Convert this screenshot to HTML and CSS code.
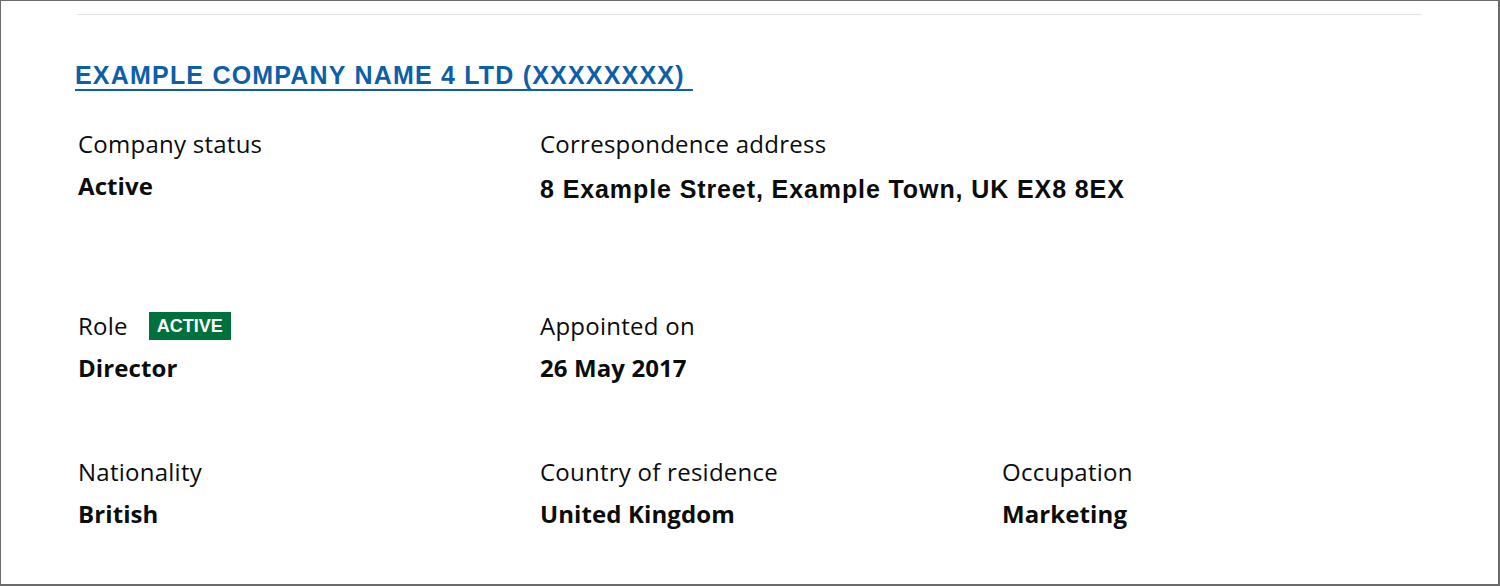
FILE: index.html
```html
<!DOCTYPE html>
<html lang="en">
<head>
<meta charset="utf-8">
<title>Appointment</title>
<link rel="stylesheet" href="styles.css">
</head>
<body>
<div class="frame">
  <div class="container">
    <hr class="rule">
    <h2 class="title"><a href="#" class="title-link">EXAMPLE COMPANY NAME 4 LTD (XXXXXXXX) </a></h2>
    <div class="row row-first">
      <div class="cell">
        <div class="label">Company status</div>
        <div class="value">Active</div>
      </div>
      <div class="cell cell-wide">
        <div class="label">Correspondence address</div>
        <div class="value value-address">8 Example Street, Example Town, UK EX8 8EX</div>
      </div>
    </div>
    <div class="row row-second">
      <div class="cell">
        <div class="label label-flex">Role <span class="tag">ACTIVE</span></div>
        <div class="value">Director</div>
      </div>
      <div class="cell">
        <div class="label">Appointed on</div>
        <div class="value">26 May 2017</div>
      </div>
    </div>
    <div class="row">
      <div class="cell">
        <div class="label">Nationality</div>
        <div class="value">British</div>
      </div>
      <div class="cell">
        <div class="label">Country of residence</div>
        <div class="value">United Kingdom</div>
      </div>
      <div class="cell">
        <div class="label">Occupation</div>
        <div class="value">Marketing</div>
      </div>
    </div>
  </div>
</div>
</body>
</html>
```
FILE: styles.css
```css
html, body {
  margin: 0;
  padding: 0;
  background: #ffffff;
}

.frame {
  box-sizing: border-box;
  width: 1500px;
  height: 586px;
  border: 1px solid #6b6b6b;
  border-right-width: 2px;
  border-bottom-width: 2px;
  background: #ffffff;
  overflow: hidden;
}

.container {
  margin: 0 76px;
  padding-top: 13px;
  color: #0b0c0c;
  font-family: "Open Sans", "Noto Sans", Arial, sans-serif;
}

.rule {
  margin: 0;
  border: 0;
  height: 1px;
  background: #e3e3e3;
}

.title {
  margin: 45px 0 0 -2px;
  font-family: "Liberation Sans", Arial, sans-serif;
  font-weight: 700;
  font-size: 25px;
  line-height: 30px;
  letter-spacing: 1.2px;
}

.title-link {
  color: #0d5fa8;
  text-decoration: underline;
  text-decoration-thickness: 2px;
  text-underline-offset: 5px;
  white-space: pre;
}

.row {
  display: grid;
  grid-template-columns: 462px 462px 1fr;
  margin-left: 1px;
}

.row-first {
  margin-top: 39px;
  margin-bottom: 107px;
}

.row-second {
  margin-bottom: 74px;
}

.cell-wide {
  grid-column: span 2;
}

.label {
  font-size: 24px;
  line-height: 30px;
  font-weight: 400;
  letter-spacing: 0.25px;
}

.label-flex {
  display: flex;
  align-items: center;
  gap: 21px;
}

.value {
  margin-top: 12px;
  font-size: 24px;
  line-height: 30px;
  font-weight: 700;
  letter-spacing: 0.1px;
}

.value-address {
  font-family: "Liberation Sans", Arial, sans-serif;
  font-size: 25px;
  letter-spacing: 0.9px;
  margin-top: 15px;
}

.tag {
  display: inline-block;
  background: #00703c;
  color: #ffffff;
  font-family: "Liberation Sans", Arial, sans-serif;
  font-weight: 700;
  font-size: 18px;
  line-height: 28px;
  padding: 0 8px;
  letter-spacing: 0;
}
```
